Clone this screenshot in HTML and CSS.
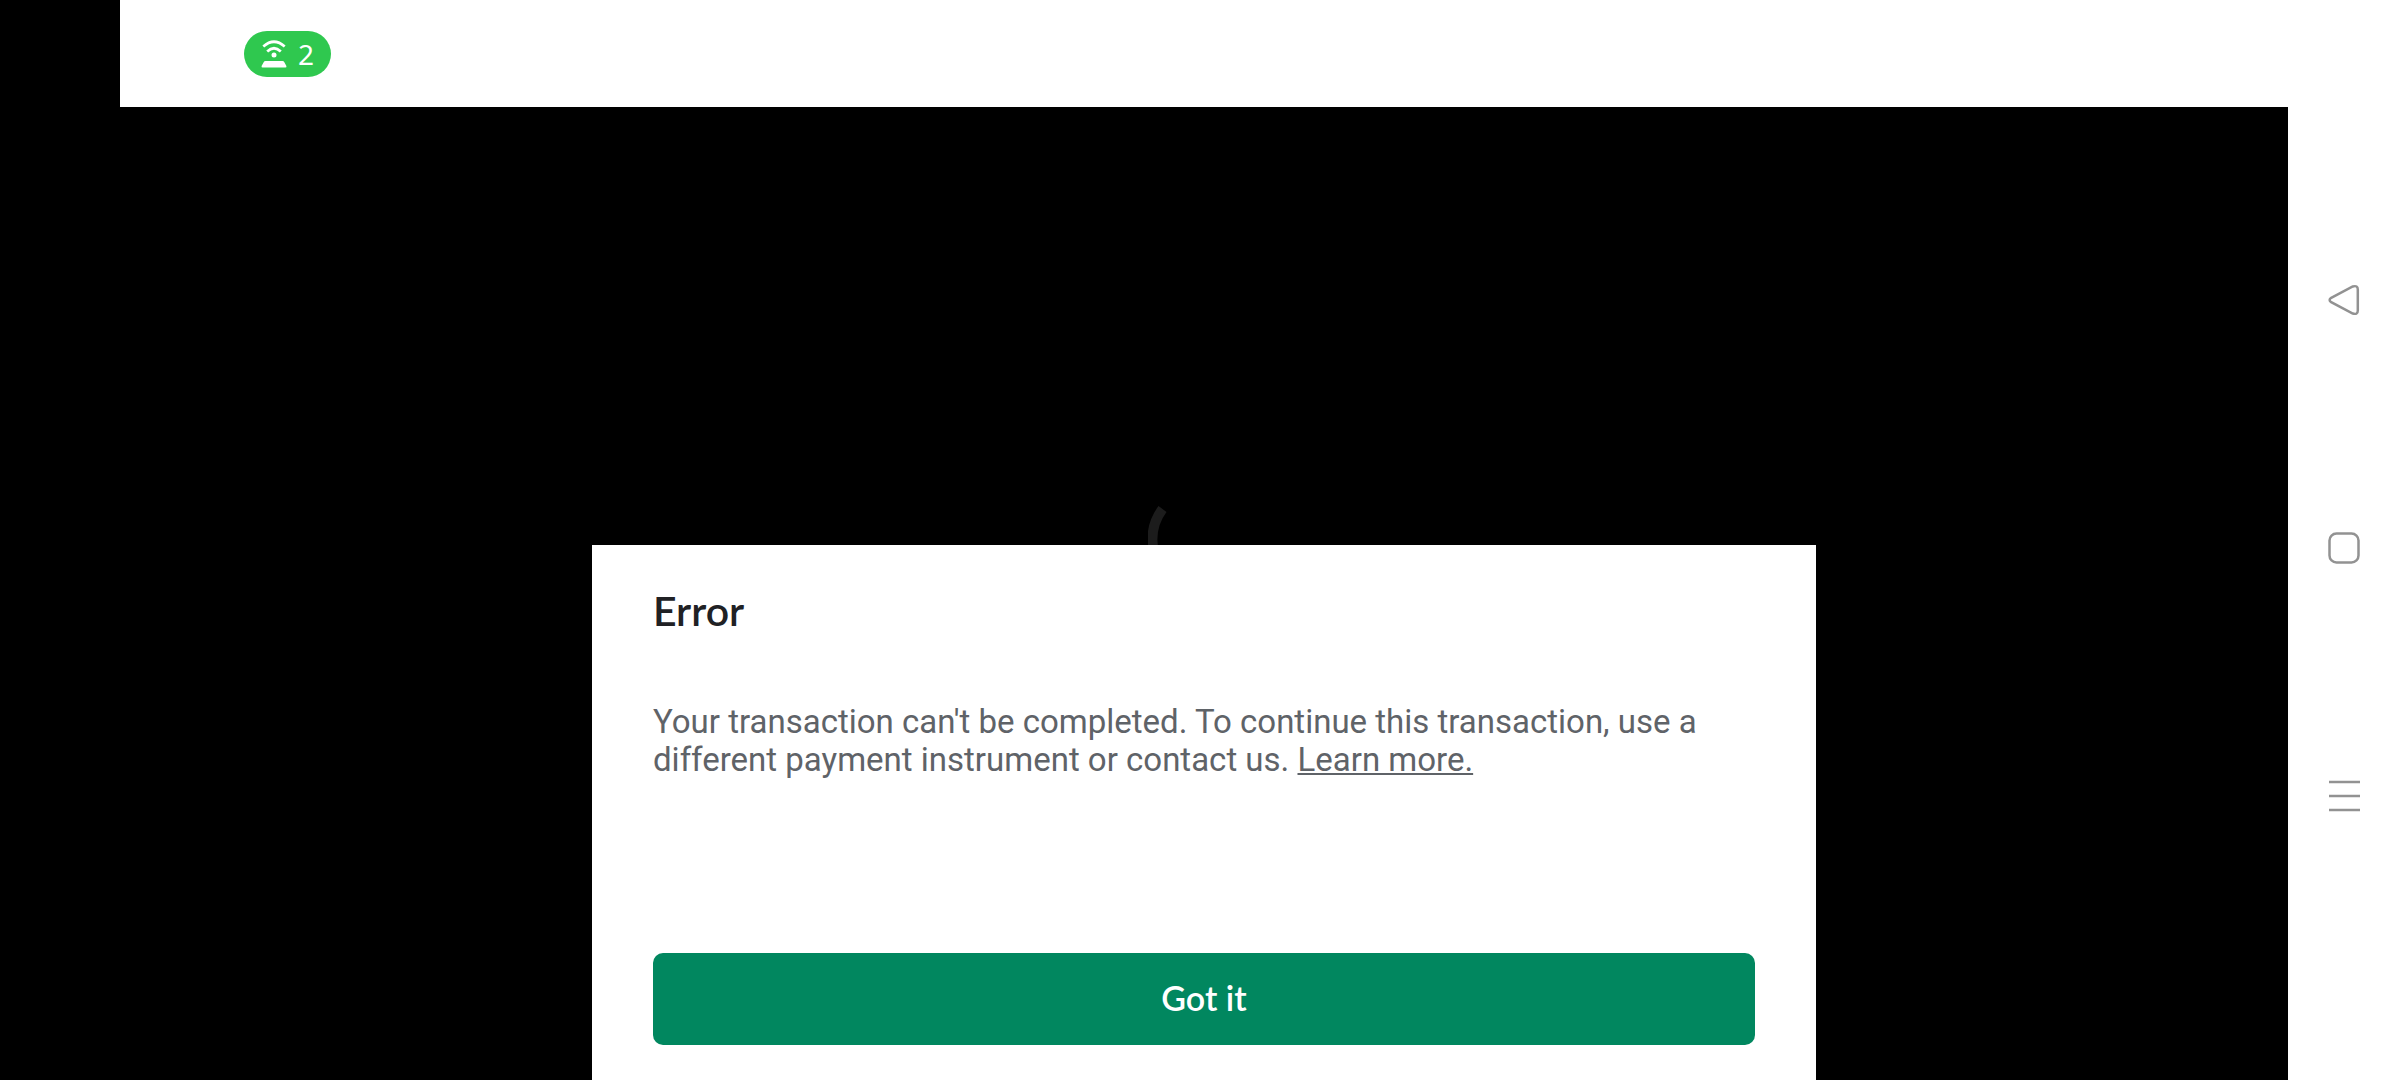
FILE: index.html
```html
<!DOCTYPE html>
<html lang="en">
<head>
  <meta charset="utf-8">
  <meta name="viewport" content="width=device-width, initial-scale=1">
  <title>Error</title>
  <link rel="stylesheet" href="styles.css">
</head>
<body class="device">
  <header class="status-bar">
    <div class="hotspot">
      <svg class="hotspot-icon" viewBox="0 0 26 28" width="26" height="28" aria-hidden="true">
        <g fill="none" stroke="currentColor" stroke-width="2.700">
          <path d="M2.300 6.500Q13 -3 23.700 6.500"/>
          <path d="M6.200 11.500Q13 5 19.800 11.500"/>
        </g>
        <circle cx="13" cy="15" r="2.500" fill="currentColor"/>
        <path d="M4.500 21h17q1.300 0 1.700 1l2.200 4q.4 1.500-1 1.500H1.600q-1.400 0-1-1.500l2.200-4q.4-1 1.700-1z" fill="currentColor"/>
      </svg>
      <span class="hotspot-count">2</span>
    </div>
  </header>
  <main class="stage">
    <svg class="spinner" viewBox="0 0 112 112" width="112" height="112" aria-hidden="true">
      <path d="M14.500 25A51 51 0 0 0 14.500 86" fill="none" stroke="#1c1c1c" stroke-width="10"/>
    </svg>
    <section class="sheet" role="dialog" aria-labelledby="sheet-title">
      <h1 class="sheet-title" id="sheet-title">Error</h1>
      <p class="sheet-text">Your transaction can't be completed. To continue this transaction, use a different payment instrument or contact us. <a class="sheet-link" href="#">Learn more.</a></p>
      <button class="sheet-button" type="button">Got it</button>
    </section>
  </main>
  <nav class="system-nav" aria-label="System">
    <button class="nav-button" type="button" aria-label="Back">
      <svg class="nav-icon" viewBox="0 0 32 32" width="32" height="32"><path d="M3.200 13.800L24.800 2.500Q29.800 1 29.800 5.500V26.500Q29.800 31 24.800 29.500L3.200 18.200Q0 16 3.200 13.800Z"/></svg>
    </button>
    <button class="nav-button" type="button" aria-label="Home">
      <svg class="nav-icon" viewBox="0 0 32 32" width="32" height="32"><rect x="1.500" y="1.500" width="29" height="29" rx="7"/></svg>
    </button>
    <button class="nav-button" type="button" aria-label="Recent apps">
      <svg class="nav-icon" viewBox="0 0 32 32" width="32" height="32"><path d="M1 2H32M1 16H32M1 30H32"/></svg>
    </button>
  </nav>
</body>
</html>
```

FILE: styles.css
```css
* {
  box-sizing: border-box;
}

.device {
  display: grid;
  grid-template-columns: 120px minmax(0, 1fr) 112px;
  grid-template-rows: 107px minmax(0, 1fr);
  min-height: 100vh;
  margin: 0;
  background: #000;
  font-family: Roboto, sans-serif;
}

.status-bar {
  grid-column: 2;
  grid-row: 1;
  display: flex;
  align-items: center;
  padding: 0 124px;
  background: #fff;
}

.hotspot {
  display: flex;
  align-items: center;
  justify-content: center;
  gap: 11px;
  width: 87px;
  height: 46px;
  border-radius: 23px;
  background: #2fc84f;
  color: #fff;
}

.hotspot-count {
  font-family: "Noto Sans", sans-serif;
  font-size: 28px;
  line-height: 32px;
}

/* The spinner and the sheet share one cell; the sheet covers the spinner. */
.stage {
  grid-column: 2;
  grid-row: 1 / 3;
  display: grid;
  grid-template: minmax(0, 1fr) / minmax(0, 1fr);
  min-height: 100vh;
}

.spinner {
  grid-area: 1 / 1;
  place-self: center;
}

.sheet {
  grid-area: 1 / 1;
  place-self: end center;
  z-index: 1;
  display: flex;
  flex-direction: column;
  width: 1224px;
  max-width: 100%;
  padding: 42px 61px 35px;
  background: #fff;
}

.sheet-title {
  margin: 0 0 68px;
  color: #202124;
  font-family: Lato, sans-serif;
  font-size: 41px;
  font-weight: 600;
  line-height: 48px;
}

.sheet-text {
  margin: 0 0 174px;
  color: #5f6368;
  font-size: 33px;
  line-height: 38px;
}

.sheet-link {
  color: inherit;
  text-decoration-thickness: 2px;
  text-underline-offset: 2px;
}

.sheet-button {
  height: 92px;
  padding: 0 24px 4px;
  border: 0;
  border-radius: 10px;
  background: #01875f;
  color: #fff;
  font-family: Lato, sans-serif;
  font-size: 34px;
  font-weight: 600;
}

.system-nav {
  grid-column: 3;
  grid-row: 1 / 3;
  display: flex;
  flex-direction: column;
  align-items: center;
  justify-content: center;
  gap: 200px;
  padding-top: 16px;
  background: #fff;
}

.nav-button {
  display: grid;
  place-items: center;
  width: 48px;
  height: 48px;
  padding: 0;
  border: 0;
  background: none;
}

.nav-icon {
  fill: none;
  stroke: #929292;
  stroke-width: 2.5;
}
```
